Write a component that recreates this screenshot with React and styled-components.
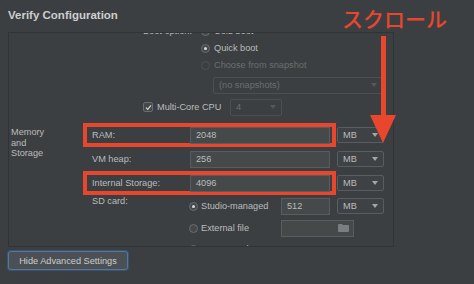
import React from 'react';
import styled, { createGlobalStyle } from 'styled-components';

const RED = '#e9462e';
const TEXT = '#bbbcbd';
const DIM = '#6b6e70';

const Global = createGlobalStyle`
  html, body { margin: 0; padding: 0; background: #3c3f41; }
  body { font-family: "Liberation Sans", Arial, sans-serif; }
`;

const Page = styled.div`
  position: relative;
  width: 474px;
  height: 284px;
  overflow: hidden;
  background: #3c3f41;
  color: ${TEXT};
  font-size: 9.2px;
  line-height: 11px;
`;

const Title = styled.div`
  height: 32px;
  box-sizing: border-box;
  padding: 0 0 1px 8px;
  display: flex;
  align-items: center;
  font-weight: bold;
  font-size: 11.5px;
  color: #cdcecf;
`;

const Panel = styled.div`
  margin-left: 8px;
  width: 386px;
  height: 215px;
  box-sizing: border-box;
  border: 1px solid #313335;
  overflow: hidden;
`;

const Scroll = styled.div`
  margin-top: -10px;
`;

const Row = styled.div`
  display: flex;
  align-items: center;
  height: ${(p) => p.$h}px;
  padding-left: ${(p) => p.$indent || 0}px;
  color: ${(p) => (p.$disabled ? DIM : TEXT)};
`;

const SideLabel = styled.div`
  width: 183px;
  flex-shrink: 0;
  text-align: right;
`;

const Radio = styled.span`
  width: 9px;
  height: 9px;
  box-sizing: border-box;
  border-radius: 50%;
  flex-shrink: 0;
  margin-left: ${(p) => p.$ml || 0}px;
  margin-right: ${(p) => p.$mr || 4}px;
  border: 1px solid ${(p) => (p.$disabled ? '#4f5254' : '#6a6d70')};
  background: ${(p) => (p.$disabled ? 'transparent' : '#45494a')};
  display: flex;
  align-items: center;
  justify-content: center;
  &::after {
    content: '';
    display: ${(p) => (p.$checked ? 'block' : 'none')};
    width: 3px;
    height: 3px;
    border-radius: 50%;
    background: #dcdcdc;
  }
`;

const Combo = styled.div`
  display: flex;
  align-items: center;
  justify-content: space-between;
  box-sizing: border-box;
  flex-shrink: 0;
  width: ${(p) => p.$w}px;
  height: ${(p) => p.$h || 17}px;
  margin-left: ${(p) => p.$ml || 0}px;
  padding: 0 5px 0 5px;
  border: 1px solid ${(p) => (p.$disabled ? '#4d5052' : '#5a5d5f')};
  border-radius: 2px;
  background: ${(p) => (p.$disabled ? '#3c3f41' : '#3f4244')};
  color: ${(p) => (p.$disabled ? DIM : TEXT)};
`;

const Caret = styled.span`
  width: 0;
  height: 0;
  border-left: 3px solid transparent;
  border-right: 3px solid transparent;
  border-top: 4px solid ${(p) => (p.$disabled ? '#55585a' : '#a3a5a7')};
`;

const Check = styled.span`
  width: 10px;
  height: 10px;
  box-sizing: border-box;
  flex-shrink: 0;
  margin-right: 4px;
  border: 1px solid #6a6d70;
  border-radius: 2px;
  background: #45494a;
  display: flex;
  align-items: center;
  justify-content: center;
`;

const Section = styled.div`
  display: flex;
`;

const Category = styled.div`
  width: 74px;
  flex-shrink: 0;
  box-sizing: border-box;
  padding: 9px 0 0 2px;
  line-height: 10.5px;
`;

const Rows = styled.div`
  display: flex;
  flex-direction: column;
  padding-top: 5px;
`;

const Line = styled.div`
  display: flex;
  align-items: center;
  height: ${(p) => p.$h}px;
  padding-left: ${(p) => p.$indent || 0}px;
`;

const Mark = styled.div`
  display: flex;
  align-items: center;
  box-sizing: border-box;
  width: 253px;
  height: 24px;
  padding: 0 2px 0 5px;
  border: 4px solid ${(p) => (p.$on ? RED : 'transparent')};
`;

const FieldLabel = styled.div`
  width: ${(p) => p.$w || 98}px;
  flex-shrink: 0;
  align-self: ${(p) => (p.$top ? 'flex-start' : 'auto')};
  margin-top: ${(p) => (p.$top ? 1 : 0)}px;
`;

const Field = styled.div`
  display: flex;
  align-items: center;
  justify-content: space-between;
  box-sizing: border-box;
  flex-shrink: 0;
  width: ${(p) => p.$w}px;
  height: 17px;
  padding: 0 4px 0 5px;
  border: 1px solid #5a5d5f;
  background: #45494a;
  color: ${TEXT};
`;

const OptionText = styled.div`
  width: ${(p) => p.$w}px;
  flex-shrink: 0;
`;

const Button = styled.button`
  display: block;
  margin: 4px 0 0 8px;
  width: 120px;
  height: 19px;
  padding: 0;
  box-sizing: border-box;
  border: 1px solid #5477a0;
  box-shadow: 0 0 0 1px #3a5472;
  border-radius: 3px;
  background: #4b5055;
  color: #cbcccd;
  font-family: "Liberation Sans", Arial, sans-serif;
  font-size: 9.2px;
`;

const Callout = styled.div`
  position: absolute;
  left: 342px;
  top: 8px;
  font-family: "Noto Sans CJK JP", sans-serif;
  font-weight: 500;
  font-size: 21px;
  line-height: 21px;
  color: ${RED};
  white-space: nowrap;
`;

const ArrowSvg = styled.svg`
  position: absolute;
  left: 368px;
  top: 36px;
`;

const Folder = () => (
  <svg width="11" height="8" viewBox="0 0 11 8">
    <path d="M0 1 Q0 0 1 0 H4 L5 1 H10 Q11 1 11 2 V7 Q11 8 10 8 H1 Q0 8 0 7 Z" fill="#7b7e80" />
  </svg>
);

const Tick = () => (
  <svg width="7" height="7" viewBox="0 0 7 7">
    <path d="M1 3.6 L2.8 5.4 L6 1.4" fill="none" stroke="#d6d6d6" strokeWidth="1.2" />
  </svg>
);

const MB = ({ ml = 1 }) => (
  <Combo $w={47} $h={16} $ml={ml}>
    MB
    <Caret />
  </Combo>
);

export default function App() {
  return (
    <Page>
      <Global />
      <Title>Verify Configuration</Title>
      <Panel>
        <Scroll>
          <Row $h={17}>
            <SideLabel>Boot option:</SideLabel>
            <Radio $ml={9} />
            Cold boot
          </Row>
          <Row $h={17}>
            <SideLabel />
            <Radio $ml={9} $checked />
            Quick boot
          </Row>
          <Row $h={17} $disabled>
            <SideLabel />
            <Radio $ml={9} $disabled />
            Choose from snapshot
          </Row>
          <Row $h={22}>
            <SideLabel />
            <Combo $w={170} $ml={21} $disabled>
              (no snapshots)
              <Caret $disabled />
            </Combo>
          </Row>
          <Row $h={22} $indent={134}>
            <Check>
              <Tick />
            </Check>
            <OptionText $w={73}>Multi-Core CPU</OptionText>
            <Combo $w={52} $disabled>
              4
              <Caret $disabled />
            </Combo>
          </Row>
          <Section>
            <Category>
              Memory
              <br />
              and
              <br />
              Storage
            </Category>
            <Rows>
              <Line $h={24}>
                <Mark $on>
                  <FieldLabel>RAM:</FieldLabel>
                  <Field $w={140}>2048</Field>
                </Mark>
                <MB />
              </Line>
              <Line $h={24}>
                <Mark>
                  <FieldLabel>VM heap:</FieldLabel>
                  <Field $w={140}>256</Field>
                </Mark>
                <MB />
              </Line>
              <Line $h={24}>
                <Mark $on>
                  <FieldLabel>Internal Storage:</FieldLabel>
                  <Field $w={140}>4096</Field>
                </Mark>
                <MB />
              </Line>
              <Line $h={22} $indent={9}>
                <FieldLabel $w={97} $top>
                  SD card:
                </FieldLabel>
                <Radio $checked $mr={3} />
                <OptionText $w={80}>Studio-managed</OptionText>
                <Field $w={49}>512</Field>
                <MB ml={7} />
              </Line>
              <Line $h={22} $indent={9}>
                <FieldLabel $w={97} />
                <Radio $mr={3} />
                <OptionText $w={80}>External file</OptionText>
                <Field $w={73}>
                  <span />
                  <Folder />
                </Field>
              </Line>
              <Line $h={20} $indent={9}>
                <FieldLabel $w={97} />
                <Radio $mr={3} />
                <OptionText $w={80}>No SD card</OptionText>
              </Line>
            </Rows>
          </Section>
        </Scroll>
      </Panel>
      <Button>Hide Advanced Settings</Button>

      <Callout>スクロール</Callout>
      <ArrowSvg width="30" height="110" viewBox="0 0 30 110">
        <rect x="13" y="0" width="5" height="82" fill={RED} />
        <polygon points="2,79 28,79 15,107" fill={RED} />
      </ArrowSvg>
    </Page>
  );
}
